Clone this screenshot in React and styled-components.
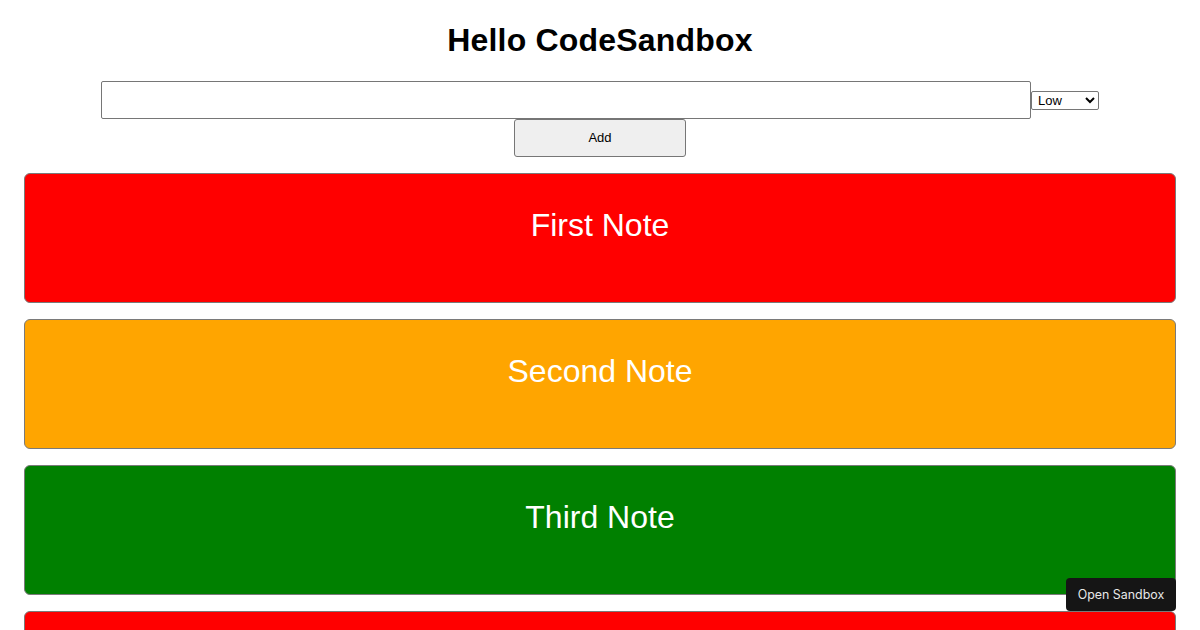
import React, { useState } from 'react';
import styled, { createGlobalStyle } from 'styled-components';

const GlobalStyle = createGlobalStyle`
  body {
    margin: 0;
    background: #fff;
    font-family: "Liberation Sans", Arial, sans-serif;
    overflow: hidden;
  }
`;

const Page = styled.div`
  padding: 0 24px;
  text-align: center;
`;

const Title = styled.h1`
  margin: 0;
  padding-top: 22px;
  height: 59px;
  font-size: 32px;
  line-height: 37px;
  font-weight: bold;
  letter-spacing: 0.2px;
  color: #000;
`;

const Form = styled.form`
  display: flex;
  flex-direction: column;
  align-items: center;
  margin-bottom: 16px;
`;

const InputRow = styled.div`
  display: flex;
  align-items: center;
`;

const TextInput = styled.input`
  box-sizing: border-box;
  width: 930px;
  height: 38px;
  border: 1px solid #767676;
  border-radius: 2px;
  font-family: "Liberation Sans", Arial, sans-serif;
  font-size: 16px;
  padding: 0 6px;
  outline: none;
`;

const Priority = styled.select`
  box-sizing: border-box;
  width: 68px;
  height: 19px;
  font-family: "Liberation Sans", Arial, sans-serif;
  font-size: 13px;
  border: 1px solid #767676;
  border-radius: 2px;
  background: #fff;
  color: #000;
  padding: 0 2px;
`;

const AddButton = styled.button`
  box-sizing: border-box;
  width: 172px;
  height: 38px;
  padding: 0 0 2px;
  background: #efefef;
  border: 1px solid #767676;
  border-radius: 3px;
  font-family: "Liberation Sans", Arial, sans-serif;
  font-size: 13px;
  color: #000;
`;

const NoteList = styled.div`
  display: flex;
  flex-direction: column;
  gap: 16px;
`;

const Note = styled.div`
  box-sizing: border-box;
  height: 130px;
  padding-top: 33px;
  background: ${p => p.$color};
  border: 1px solid #7a7a7a;
  border-radius: 6px;
  color: #fff;
  font-size: 32px;
  line-height: 37px;
`;

const SandboxButton = styled.a`
  position: fixed;
  right: 24px;
  bottom: 19px;
  box-sizing: border-box;
  width: 110px;
  height: 33px;
  display: flex;
  align-items: center;
  justify-content: center;
  background: #151515;
  color: #e8e8e8;
  border-radius: 4px;
  font-family: Inter, "Liberation Sans", sans-serif;
  font-size: 12.4px;
  text-decoration: none;
`;

const colors = { High: 'red', Medium: 'orange', Low: 'green' };

const notes = [
  { text: 'First Note', priority: 'High' },
  { text: 'Second Note', priority: 'Medium' },
  { text: 'Third Note', priority: 'Low' },
  { text: 'Fourth Note', priority: 'High' },
];

export default function App() {
  const [value, setValue] = useState('');
  return (
    <Page>
      <GlobalStyle />
      <Title>Hello CodeSandbox</Title>
      <Form onSubmit={e => e.preventDefault()}>
        <InputRow>
          <TextInput value={value} onChange={e => setValue(e.target.value)} />
          <Priority defaultValue="Low">
            <option>Low</option>
            <option>Medium</option>
            <option>High</option>
          </Priority>
        </InputRow>
        <AddButton type="submit">Add</AddButton>
      </Form>
      <NoteList>
        {notes.map(n => (
          <Note key={n.text} $color={colors[n.priority]}>{n.text}</Note>
        ))}
      </NoteList>
      <SandboxButton href="#">Open Sandbox</SandboxButton>
    </Page>
  );
}
